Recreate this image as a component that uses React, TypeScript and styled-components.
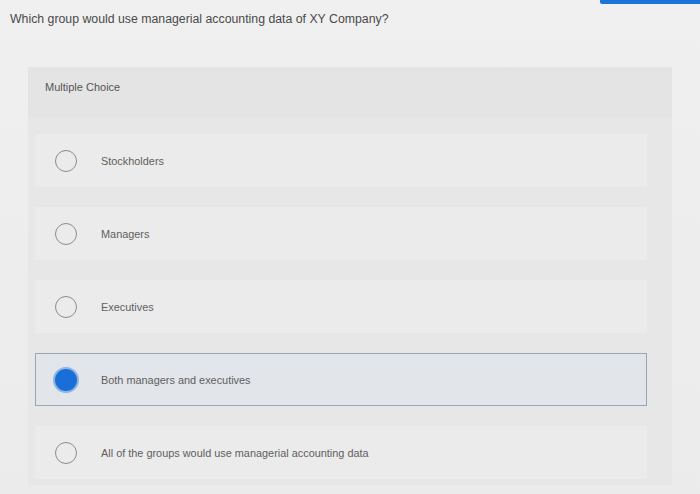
import React, { useState } from "react";
import styled, { createGlobalStyle } from "styled-components";

const GlobalStyle = createGlobalStyle`
  html, body {
    margin: 0;
    padding: 0;
    background: #ededed;
    font-family: "Liberation Sans", Arial, sans-serif;
  }
`;

const Page = styled.div`
  width: 700px;
  height: 494px;
  overflow: hidden;
  background: linear-gradient(180deg, #f0f0f0 0%, #ebebeb 100%);
  display: flex;
  flex-direction: column;
`;

const TopBar = styled.div`
  display: flex;
  justify-content: flex-end;
`;

const AccentLine = styled.div`
  width: 100px;
  height: 4px;
  background: #1b74d8;
  border-radius: 0 0 0 2px;
`;

const QuestionText = styled.h1`
  margin: 8px 0 0 10px;
  font-size: 12.3px;
  font-weight: 400;
  color: #4a4a4a;
  line-height: 14px;
`;

const Panel = styled.section`
  margin: 41px 28px 0 28px;
  background: #e7e7e7;
  padding-bottom: 6px;
`;

const PanelHeader = styled.div`
  height: 51px;
  box-sizing: border-box;
  padding: 14px 17px 0;
  background: #e4e4e4;
  font-size: 11px;
  line-height: 13px;
  color: #555;
`;

const OptionList = styled.div`
  display: flex;
  flex-direction: column;
  gap: 20px;
  padding: 16px 25px 0 7px;
`;

const Option = styled.label<{ $selected?: boolean }>`
  height: 53px;
  box-sizing: border-box;
  display: flex;
  align-items: center;
  gap: 24px;
  padding-left: 19px;
  background: ${(p) => (p.$selected ? "#e2e5e9" : "#ebebeb")};
  border: 1px solid ${(p) => (p.$selected ? "#9ba6b3" : "transparent")};
  cursor: pointer;
`;

const Radio = styled.span<{ $selected?: boolean }>`
  width: 22px;
  height: 22px;
  box-sizing: border-box;
  border-radius: 50%;
  flex-shrink: 0;
  border: ${(p) => (p.$selected ? "none" : "1px solid #8c8c8c")};
  background: ${(p) => (p.$selected ? "#1a6ed8" : "transparent")};
  box-shadow: ${(p) =>
    p.$selected ? "0 0 0 2px rgba(40, 120, 220, 0.45)" : "none"};
`;

const OptionText = styled.span`
  font-size: 10.9px;
  color: #5f5f5f;
`;

const options = [
  "Stockholders",
  "Managers",
  "Executives",
  "Both managers and executives",
  "All of the groups would use managerial accounting data",
];

export default function App() {
  const [selected, setSelected] = useState(3);

  return (
    <Page>
      <GlobalStyle />
      <TopBar>
        <AccentLine />
      </TopBar>
      <QuestionText>
        Which group would use managerial accounting data of XY Company?
      </QuestionText>
      <Panel>
        <PanelHeader>Multiple Choice</PanelHeader>
        <OptionList>
          {options.map((text, i) => (
            <Option
              key={text}
              $selected={selected === i}
              onClick={() => setSelected(i)}
            >
              <Radio $selected={selected === i} />
              <OptionText>{text}</OptionText>
            </Option>
          ))}
        </OptionList>
      </Panel>
    </Page>
  );
}
